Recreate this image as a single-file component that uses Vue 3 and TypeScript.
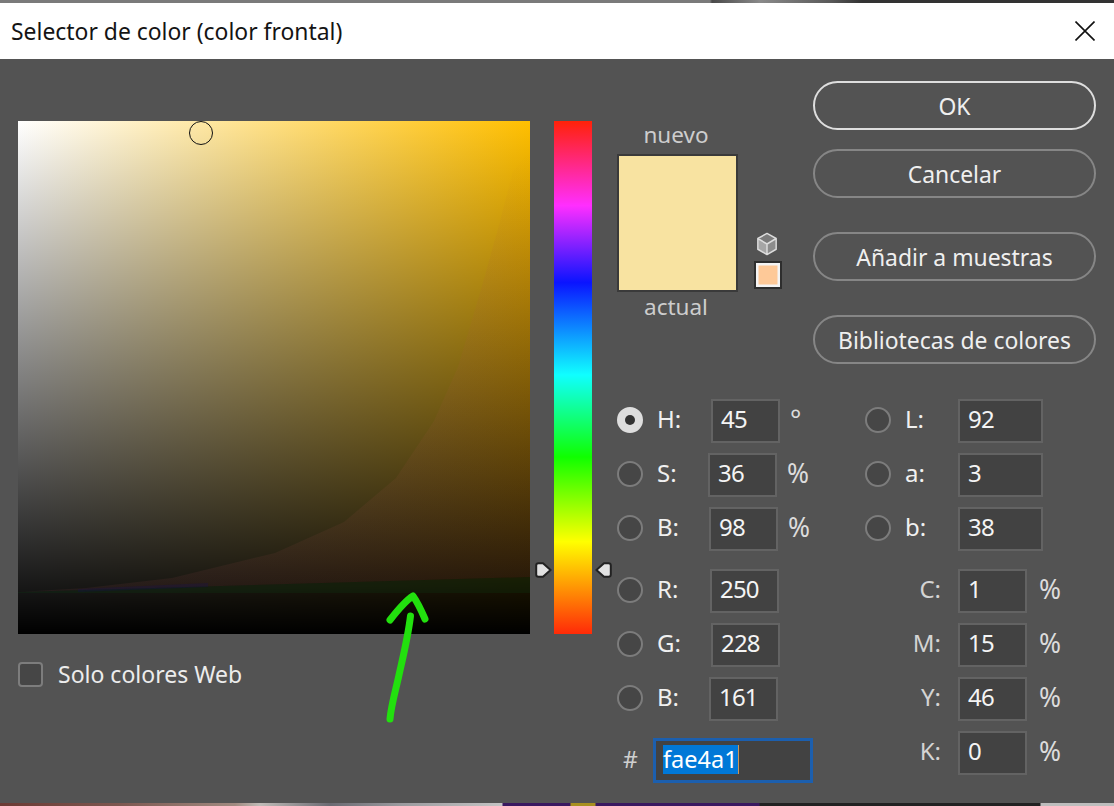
<script setup lang="ts">
type Field = { id: string; label: string; value: string; unit?: string; dx?: number; radio?: boolean; checked?: boolean }

const hue = 45

const hsb: Field[] = [
  { id: 'h', label: 'H:', value: '45', unit: '°', dx: 3, radio: true, checked: true },
  { id: 's', label: 'S:', value: '36', unit: '%', dx: 0, radio: true },
  { id: 'br', label: 'B:', value: '98', unit: '%', dx: 1, radio: true },
]
const rgb: Field[] = [
  { id: 'r', label: 'R:', value: '250', dx: 2, radio: true },
  { id: 'g', label: 'G:', value: '228', dx: 3, radio: true },
  { id: 'b', label: 'B:', value: '161', dx: 1, radio: true },
]
const lab: Field[] = [
  { id: 'l', label: 'L:', value: '92', radio: true },
  { id: 'a', label: 'a:', value: '3', radio: true },
  { id: 'bb', label: 'b:', value: '38', radio: true },
]
const cmyk: Field[] = [
  { id: 'c', label: 'C:', value: '1', unit: '%' },
  { id: 'm', label: 'M:', value: '15', unit: '%' },
  { id: 'y', label: 'Y:', value: '46', unit: '%' },
  { id: 'k', label: 'K:', value: '0', unit: '%' },
]

const sliderTop = `${(1 - hue / 360) * 100}%`
</script>

<template>
  <div class="dialog">
    <div class="top-strip"></div>

    <header class="titlebar">
      <span class="title">Selector de color (color frontal)</span>
      <svg class="close" width="20" height="20" viewBox="0 0 20 20">
        <path d="M0.5 0.5 L19.5 19.5 M19.5 0.5 L0.5 19.5" stroke="#111" stroke-width="1.6" fill="none" />
      </svg>
    </header>

    <main class="body">
      <section class="picker">
        <div class="field">
          <svg class="field-tint" width="512" height="513" viewBox="0 0 512 513">
            <defs>
              <linearGradient id="outer-tint" x1="0" y1="0" x2="0" y2="1">
                <stop offset="0" stop-color="#b05a40" stop-opacity="0" />
                <stop offset="0.25" stop-color="#b05a40" stop-opacity="0.09" />
                <stop offset="1" stop-color="#a04a50" stop-opacity="0.11" />
              </linearGradient>
            </defs>
            <path
              d="M512 30 L495 50 L481 104 L464 165 L440 246 L416 300 L378 357 L326 401 L257 432 L154 457 L68 467 L0 471 L512 456 Z"
              fill="url(#outer-tint)" />
            <path d="M0 471 L512 456 L512 472 L0 472 Z" fill="#0c3a12" opacity="0.25" />
            <path d="M60 468 L190 462 L190 466 L60 471 Z" fill="#12105a" opacity="0.25" />
          </svg>
          <span class="marker"></span>
        </div>
        <label class="web-check">
          <span class="checkbox"></span>
          Solo colores Web
        </label>
      </section>

      <div class="hue">
        <svg class="slider slider-left" :style="{ top: sliderTop }" width="17" height="16" viewBox="0 0 17 16">
          <path d="M3.5 1.2 H8 L15.6 8 L8 14.8 H3.5 Q1.2 14.8 1.2 12.5 V3.5 Q1.2 1.2 3.5 1.2 Z" fill="#e2e2e2" stroke="#222" stroke-width="2" stroke-linejoin="round" />
        </svg>
        <svg class="slider slider-right" :style="{ top: sliderTop }" width="17" height="16" viewBox="0 0 17 16">
          <path d="M13.5 1.2 H9 L1.4 8 L9 14.8 H13.5 Q15.8 14.8 15.8 12.5 V3.5 Q15.8 1.2 13.5 1.2 Z" fill="#e2e2e2" stroke="#222" stroke-width="2" stroke-linejoin="round" />
        </svg>
      </div>

      <section class="side">
        <div class="side-top">
          <div class="preview">
            <div class="preview-label">nuevo</div>
            <div class="preview-row">
              <div class="preview-box"></div>
              <div class="mini">
                <svg class="cube" width="22" height="24" viewBox="0 0 24 25" preserveAspectRatio="none">
                  <path d="M12 1.5 L22 6.8 L12 12.5 L2 6.8 Z" fill="#7b7b7b" />
                  <path d="M2 6.8 L12 12.5 V23.5 L2 18 Z" fill="#a6a6a6" />
                  <path d="M22 6.8 L12 12.5 V23.5 L22 18 Z" fill="#8c8c8c" />
                  <path d="M12 1.5 L22 6.8 V18 L12 23.5 L2 18 V6.8 Z M2 6.8 L12 12.5 L22 6.8 M12 12.5 V23.5" fill="none" stroke="#dcdcdc" stroke-width="1.6" stroke-linejoin="round" />
                </svg>
                <div class="swatch"></div>
              </div>
            </div>
            <div class="preview-label preview-label-low">actual</div>
          </div>

          <div class="buttons">
            <button class="btn btn-primary">OK</button>
            <button class="btn btn-cancel">Cancelar</button>
            <button class="btn btn-spaced">Añadir a muestras</button>
            <button class="btn btn-spaced">Bibliotecas de colores</button>
          </div>
        </div>

        <div class="fields">
          <div class="col col-left">
            <div v-for="group in [hsb, rgb]" :key="group[0].id" class="group">
              <div v-for="row in group" :key="row.id" class="row">
                <span class="radio" :class="{ checked: row.checked }"></span>
                <span class="row-label">{{ row.label }}</span>
                <span class="input" :style="{ marginLeft: `${row.dx}px` }">{{ row.value }}</span>
                <span v-if="row.unit" class="unit">{{ row.unit }}</span>
              </div>
            </div>
            <div class="hex-row">
              <span class="hash">#</span>
              <span class="hex-input"><span class="selected">fae4a1</span><i class="caret"></i></span>
            </div>
          </div>

          <div class="col">
            <div class="group">
              <div v-for="row in lab" :key="row.id" class="row">
                <span class="radio"></span>
                <span class="row-label">{{ row.label }}</span>
                <span class="input input-wide">{{ row.value }}</span>
              </div>
            </div>
            <div class="group">
              <div v-for="row in cmyk" :key="row.id" class="row">
                <span class="cmyk-label">{{ row.label }}</span>
                <span class="input">{{ row.value }}</span>
                <span class="unit unit-cmyk">{{ row.unit }}</span>
              </div>
            </div>
          </div>
        </div>
      </section>

      <svg class="annotation" width="60" height="140" viewBox="380 590 60 140">
        <path d="M390 719 C391 706 396 689 399 675 C403 657 408 637 410.5 616" fill="none" stroke="#22e00e" stroke-width="7" stroke-linecap="round" />
        <path d="M390 620 C397 611 405 601 413 596 C418 603 422 612 425 619" fill="none" stroke="#22e00e" stroke-width="7" stroke-linecap="round" stroke-linejoin="round" />
      </svg>
    </main>

    <div class="bottom-strip"></div>
  </div>
</template>

<style>
html,
body {
  background: #535353;
  overflow: hidden;
}
</style>

<style scoped>
.dialog {
  width: 1114px;
  height: 806px;
  display: flex;
  flex-direction: column;
  overflow: hidden;
  font-family: "Noto Sans", "Open Sans", sans-serif;
  background: #535353;
}

.top-strip {
  height: 3px;
  background: linear-gradient(to right, #7a7a7a 0, #7a7a7a 710px, #4a4a4a 712px, #8a8a8a 760px, #5a5a5a 830px, #333 862px, #333 100%);
}

.titlebar {
  height: 56px;
  display: flex;
  align-items: center;
  justify-content: space-between;
  padding: 0 19px 0 11px;
  background: #fff;
}

.title {
  padding-top: 1px;
  font-size: 22.9px;
  color: #141414;
}

.body {
  flex: 1;
  position: relative;
  display: flex;
  align-items: flex-start;
  padding: 22px 18px 0;
  background: #535353;
}

.picker {
  width: 512px;
  margin-top: 40px;
}

.field {
  position: relative;
  height: 513px;
  background:
    linear-gradient(to bottom, rgba(0, 0, 0, 0), #000),
    linear-gradient(to right, #fff, #ffbf00);
}

.field-tint {
  position: absolute;
  left: 0;
  top: 0;
}

.marker {
  position: absolute;
  left: 171px;
  top: 0;
  width: 24px;
  height: 24px;
  box-sizing: border-box;
  border: 1.5px solid #111;
  border-radius: 50%;
}

.web-check {
  display: flex;
  align-items: center;
  gap: 15px;
  margin-top: 28px;
  font-size: 23px;
  line-height: 25px;
  color: #ececec;
}

.checkbox {
  width: 25px;
  height: 25px;
  box-sizing: border-box;
  border: 2px solid #7d7d7d;
  border-radius: 4px;
  background: #464646;
}

.hue {
  position: relative;
  width: 38px;
  height: 513px;
  margin: 40px 0 0 24px;
  background: linear-gradient(to bottom, #ff2208 0%, #ff2eff 16.5%, #0a14ff 31.5%, #10ffff 49.5%, #10ff00 65.5%, #ffff00 82%, #ff2a08 100%);
}

.slider {
  position: absolute;
  margin-top: -8px;
}

.slider-left {
  left: -19px;
}

.slider-right {
  right: -20px;
}

.side {
  width: 479px;
  margin-left: 25px;
}

.side-top {
  display: flex;
  justify-content: space-between;
  height: 318px;
}

.preview {
  margin-top: 40px;
  width: 165px;
}

.preview-label {
  width: 118px;
  height: 33px;
  line-height: 28px;
  text-align: center;
  font-size: 22.5px;
  color: #cdcdcd;
}

.preview-label-low {
  line-height: 29px;
}

.preview-row {
  display: flex;
  align-items: flex-end;
  gap: 16px;
}

.preview-box {
  width: 121px;
  height: 138px;
  box-sizing: border-box;
  border: 2px solid #3a3a3a;
  background: #f8e3a1;
}

.mini {
  display: flex;
  flex-direction: column;
  align-items: center;
  gap: 5px;
  margin-bottom: 3px;
}

.cube {
  display: block;
  margin-right: 2px;
}

.swatch {
  width: 28px;
  height: 28px;
  box-sizing: border-box;
  border: 2px solid #2e2e2e;
  box-shadow: inset 0 0 0 2.5px #f4f4f4;
  background: #fec998;
}

.buttons {
  width: 283px;
  display: flex;
  flex-direction: column;
}

.btn {
  height: 49px;
  padding: 2px 0 0;
  box-sizing: border-box;
  border: 2px solid #868686;
  border-radius: 25px;
  background: transparent;
  font-family: inherit;
  font-size: 22.9px;
  color: #efefef;
}

.btn-primary {
  border-color: #dedede;
}

.btn-cancel {
  margin-top: 19px;
}

.btn-spaced {
  margin-top: 34px;
}

.fields {
  display: grid;
  grid-template-columns: 248px 1fr;
}

.col {
  display: flex;
  flex-direction: column;
  gap: 18px;
}

.group {
  display: flex;
  flex-direction: column;
  gap: 10px;
}

.row {
  display: flex;
  align-items: center;
  height: 44px;
  font-size: 24px;
  line-height: 38px;
  color: #f0f0f0;
}

.radio {
  position: relative;
  flex: none;
  width: 26px;
  height: 26px;
  margin: -3px 14px 0 0;
  box-sizing: border-box;
  border: 2px solid #7c7c7c;
  border-radius: 50%;
  background: #464646;
}

.radio.checked {
  border-color: #dedede;
  background: #dedede;
}

.radio.checked::after {
  content: "";
  position: absolute;
  left: 6px;
  top: 6px;
  width: 10px;
  height: 10px;
  border-radius: 50%;
  background: #333;
}

.row-label {
  width: 51px;
  margin-bottom: 4px;
}

.input {
  width: 69px;
  height: 44px;
  box-sizing: border-box;
  padding-left: 8px;
  line-height: 36px;
  letter-spacing: -0.8px;
  border: 2px solid #636363;
  background: #424242;
  color: #f4f4f4;
}

.input-wide {
  width: 85px;
  margin-left: 2px;
}

.unit {
  margin: 0 0 4px 10px;
  font-size: 26.5px;
  color: #dcdcdc;
}

.unit-cmyk {
  margin-left: 12px;
}

.cmyk-label {
  width: 76px;
  margin: 0 17px 4px 0;
  text-align: right;
  color: #d4d4d4;
}

.hex-row {
  display: flex;
  align-items: center;
  margin-top: -1px;
  padding-left: 6px;
  font-size: 23px;
}

.hash {
  width: 30px;
  margin-bottom: 4px;
  color: #cfcfcf;
}

.hex-input {
  display: flex;
  align-items: center;
  width: 160px;
  height: 45px;
  box-sizing: border-box;
  padding: 0 0 3px 7px;
  border: 3px solid #1c5fae;
  background: #424242;
}

.selected {
  font-size: 23.5px;
  line-height: 29px;
  background: #0078d7;
  color: #fff;
}

.caret {
  width: 1px;
  height: 29px;
  background: #c9975a;
}

.annotation {
  position: absolute;
  left: 380px;
  top: 531px;
}

.bottom-strip {
  height: 3px;
  background: linear-gradient(to right, #6b3a34 0, #7d5750 120px, #a08a80 235px, #c0bcb8 260px, #6a6a72 330px, #9a9a9e 400px, #c4c4c4 502px, #3a1860 503px, #3a1860 570px, #a89020 571px, #a89020 595px, #3a1860 596px, #3a1860 759px, #222 760px, #222 1040px, #bdbdbd 1041px, #bdbdbd 100%);
}
</style>
